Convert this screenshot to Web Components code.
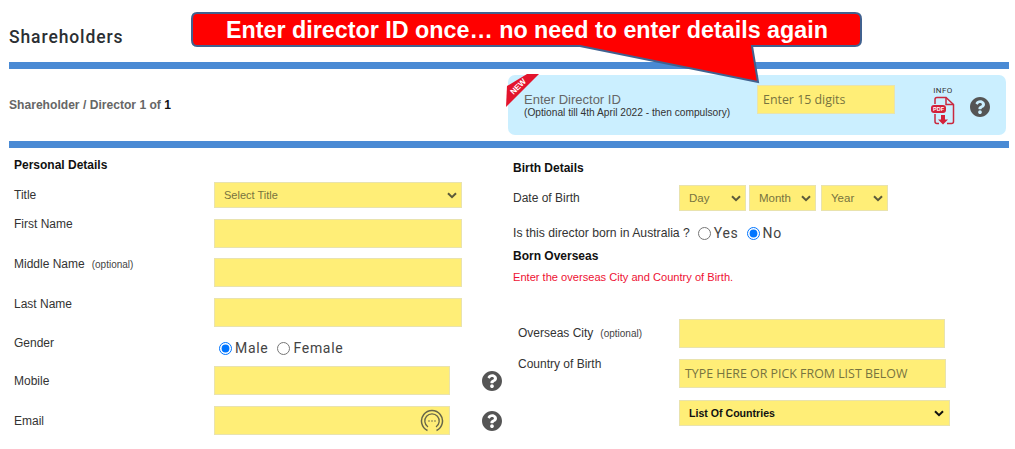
<!DOCTYPE html>
<html>
<head>
<meta charset="utf-8">
<title>Shareholders</title>
<style>
  html, body { margin: 0; padding: 0; background: #fff; }
</style>
</head>
<body>
<sh-page></sh-page>
<script>
const SANS = '"Liberation Sans", Arial, sans-serif';
const QUESTION = "M504 256c0 136.997-111.043 248-248 248S8 392.997 8 256C8 119.083 119.043 8 256 8s248 111.083 248 248zM262.655 90c-54.497 0-89.255 22.957-116.549 63.758-3.536 5.286-2.353 12.415 2.715 16.258l34.699 26.31c5.205 3.947 12.621 3.008 16.665-2.122 17.864-22.658 30.113-35.797 57.303-35.797 20.429 0 45.698 13.148 45.698 32.958 0 14.976-12.363 22.667-32.534 33.976C247.128 238.528 216 254.941 216 296v4c0 6.627 5.373 12 12 12h56c6.627 0 12-5.373 12-12v-1.333c0-28.462 83.186-29.647 83.186-106.667 0-58.002-60.165-102-116.531-102zM256 338c-25.365 0-46 20.635-46 46 0 25.364 20.635 46 46 46s46-20.636 46-46c0-25.365-20.635-46-46-46z";

customElements.define('help-icon', class extends HTMLElement {
   constructor(){ super(); this.attachShadow({mode:'open'}); }
   connectedCallback(){
      this.shadowRoot.innerHTML = `
      <style>
      :host{ display:block; width:20px; height:20px; }
      svg{ display:block; width:20px; height:20px; }
      </style>
      <svg viewBox="8 8 496 496"><path fill="#555" d="${QUESTION}"/></svg>`;
   }
});

customElements.define('pdf-icon', class extends HTMLElement {
   constructor(){ super(); this.attachShadow({mode:'open'}); }
   connectedCallback(){
      this.shadowRoot.innerHTML = `
      <style>
      :host{ display:flex; flex-direction:column; align-items:center; width:26px; }
      span{ font:8px/9px Roboto, ${SANS}; letter-spacing:.4px; color:#333; }
      svg{ display:block; margin-top:1px; }
      </style>
      <span>INFO</span>
      <svg width="26" height="29" viewBox="0 0 26 29">
        <path d="M5 8V3.5Q5 1.5 7 1.5H16L23.5 8.5V25.5Q23.5 27.5 21.5 27.5H17M9 27.5H7Q5 27.5 5 25.5V18" fill="none" stroke="#c9283e" stroke-width="1.5"/>
        <path d="M16 1.5V8.5H23.5" fill="none" stroke="#c9283e" stroke-width="1.5"/>
        <rect x="1" y="9" width="15" height="8" rx="3" fill="#d3203a"/>
        <path d="M11 19H15V23.5H18L13 28.5L8 23.5H11Z" fill="#d3203a"/>
        <text x="8.5" y="15" text-anchor="middle" font-size="5.5" font-weight="700" font-family="Liberation Sans" fill="#fff">PDF</text>
      </svg>`;
   }
});

// yellow text box, the text inside it is the placeholder
customElements.define('yellow-box', class extends HTMLElement {
   constructor(){ super(); this.attachShadow({mode:'open'}); }
   connectedCallback(){
      let w = this.getAttribute("w") || 248;
      let h = this.getAttribute("h") || 29;
      this.shadowRoot.innerHTML = `
      <style>
      :host{ display:flex; align-items:center; box-sizing:border-box; width:${w}px; height:${h}px;
        background:#ffee77; border:1px solid #e9e3ae; padding:0 5px;
        font:12.4px "Open Sans", sans-serif; color:#77733f; white-space:nowrap; }
      .end{ margin-left:auto; display:flex; }
      </style>
      <slot></slot><span class="end"><slot name="end"></slot></span>`;
   }
});

customElements.define('yellow-select', class extends HTMLElement {
   constructor(){ super(); this.attachShadow({mode:'open'}); }
   connectedCallback(){
      let w = this.getAttribute("w") || 248;
      let strong = this.hasAttribute("strong");
      let size = this.getAttribute("size") || 11;
      this.shadowRoot.innerHTML = `
      <style>
      :host{ display:flex; align-items:center; justify-content:space-between; box-sizing:border-box;
        width:${w}px; height:26px; background:#ffee77; border:1px solid #e9e3ae;
        padding:0 ${strong ? 5 : 4}px 0 9px; font:${strong ? "bold " : ""}${size}px ${SANS};
        color:${strong ? "#111" : "#77733f"}; white-space:nowrap; }
      svg{ display:block; flex:none; }
      </style>
      <slot></slot>
      <svg width="10" height="7" viewBox="0 0 10 7"><path d="M1 1.2L5 5.2L9 1.2" fill="none" stroke="${strong ? "#111" : "#5c5a3a"}" stroke-width="2"/></svg>`;
   }
});

customElements.define('radio-opt', class extends HTMLElement {
   constructor(){ super(); this.attachShadow({mode:'open'}); }
   connectedCallback(){
      this.shadowRoot.innerHTML = `
      <style>
      :host{ display:inline-flex; align-items:center; font:14px Roboto, sans-serif; letter-spacing:.7px; color:#444; }
      input{ margin:0 3px 0 0; width:13px; height:13px; }
      </style>
      <input type="radio" name="${this.getAttribute("group")}" ${this.hasAttribute("checked") ? "checked" : ""}><slot></slot>`;
   }
});

// label on the left, control(s) on the right
customElements.define('form-field', class extends HTMLElement {
   constructor(){ super(); this.attachShadow({mode:'open'}); }
   connectedCallback(){
      let note = this.getAttribute("note");
      this.shadowRoot.innerHTML = `
      <style>
      :host{ display:flex; align-items:flex-start; font:12px ${SANS}; color:#333; }
      .label{ flex:none; width:var(--label-w,200px); line-height:10px; padding-top:${this.getAttribute("lt") || 0}px; white-space:nowrap; }
      small{ font-size:10px; margin-left:7px; color:#444; }
      .ctl{ display:flex; align-items:center; }
      </style>
      <div class="label">${this.getAttribute("label")}${note ? `<small>${note}</small>` : ""}</div>
      <div class="ctl"><slot></slot></div>`;
   }
});

customElements.define('id-panel', class extends HTMLElement {
   constructor(){ super(); this.attachShadow({mode:'open'}); }
   connectedCallback(){
      this.shadowRoot.innerHTML = `
      <style>
      :host{ display:block; position:relative; box-sizing:border-box; width:498px; height:60px; background:#cbefff; border-radius:7px; font-family:${SANS}; }
      .row{ display:flex; align-items:flex-start; height:100%; }
      .txt{ flex:none; width:233px; padding:17px 0 0 16px; box-sizing:content-box; }
      .t1{ font-size:13px; line-height:15px; color:#666; }
      .t2{ font-size:10.2px; line-height:12px; color:#333; white-space:nowrap; }
      yellow-box{ margin-top:10px; }
      pdf-icon{ margin:11px 0 0 35px; }
      help-icon{ margin:22px 0 0 14px; }
      .ribbon{ position:absolute; left:-2px; top:-2px; }
      .ribbon text{ font:bold 8px ${SANS}; fill:#fff; }
      </style>
      <div class="row">
        <div class="txt">
          <div class="t1">Enter Director ID</div>
          <div class="t2">(Optional till 4th April 2022 - then compulsory)</div>
        </div>
        <yellow-box w="138"><slot></slot></yellow-box>
        <pdf-icon></pdf-icon>
        <help-icon></help-icon>
      </div>
      <svg class="ribbon" width="36" height="36" viewBox="0 0 36 36">
        <path d="M1 13L21 1H33L0 34Z" fill="#e3142c"/>
        <text transform="translate(7.5 22) rotate(-45)">NEW</text>
      </svg>`;
   }
});

customElements.define('call-out', class extends HTMLElement {
   constructor(){ super(); this.attachShadow({mode:'open'}); }
   connectedCallback(){
      this.shadowRoot.innerHTML = `
      <style>
      :host{ display:block; position:absolute; left:190px; top:11px; width:674px; height:73px; }
      svg{ position:absolute; left:0; top:0; }
      div{ position:absolute; left:36px; top:6px; height:26px; font:bold 23.3px/26px ${SANS}; color:#fff; white-space:nowrap; }
      </style>
      <svg width="674" height="73" viewBox="0 0 674 73">
        <path d="M7 2H665Q671 2 671 8V29Q671 35 665 35H562L568 71L390 35H7Q2 35 2 29V8Q2 2 7 2Z" fill="#f00" stroke="#41618f" stroke-width="2"/>
      </svg>
      <div><slot></slot></div>`;
   }
});

customElements.define('sh-page', class extends HTMLElement {
   constructor(){ super(); this.attachShadow({mode:'open'}); }
   connectedCallback(){
      this.shadowRoot.innerHTML = `
      <style>
      :host{ display:block; position:relative; width:1015px; height:449px; overflow:hidden; box-sizing:border-box; padding:0 6px 0 9px; font:12px ${SANS}; color:#222; }
      h1{ margin:0; height:62px; box-sizing:border-box; padding-top:26px; font:500 17.5px/22px Roboto, sans-serif; letter-spacing:.9px; color:#2b2f33; }
      .band{ border:solid #4a8ad4; border-width:7px 0; height:72px; display:flex; align-items:center; justify-content:space-between; padding-right:3px; }
      .crumb{ font-weight:bold; font-size:12.1px; color:#666; }
      .crumb b{ color:#111; }
      .cols{ display:flex; }
      .left{ flex:none; width:504px; padding-left:5px; box-sizing:border-box; }
      .right{ flex:none; width:495px; --label-w:166px; }
      h2{ margin:0; font:bold 12px/14px ${SANS}; color:#111; }
      .left h2{ margin-top:10px; }
      .right h2.birth{ margin-top:13px; }
      form-field.t11{ margin-top:11px; }
      form-field.t10{ margin-top:10px; }
      .gap{ display:flex; gap:32px; align-items:center; }
      .radios{ display:flex; gap:9px; height:26px; align-items:center; margin-left:5px; }
      .dob{ display:flex; }
      .q{ margin-top:11px; height:22px; display:flex; align-items:center; color:#333; font-size:12.2px; }
      .q radio-opt{ margin-left:8px; }
      .q radio-opt + radio-opt{ margin-left:8px; }
      .red{ margin-top:7px; font-size:11.1px; line-height:14px; color:#ee1133; }
      .over{ margin-left:5px; --label-w:161px; }
      </style>
      <h1>Shareholders</h1>
      <div class="band">
        <div class="crumb">Shareholder / Director 1 of <b>1</b></div>
        <id-panel>Enter 15 digits</id-panel>
      </div>
      <div class="cols">
        <div class="left">
          <h2>Personal Details</h2>
          <form-field label="Title" lt="8" style="margin-top:10px"><yellow-select>Select Title</yellow-select></form-field>
          <form-field label="First Name" class="t11"><yellow-box></yellow-box></form-field>
          <form-field label="Middle Name" note="(optional)" lt="1" class="t10"><yellow-box></yellow-box></form-field>
          <form-field label="Last Name" lt="1" class="t11"><yellow-box></yellow-box></form-field>
          <form-field label="Gender" lt="3" style="margin-top:8px">
            <div class="radios"><radio-opt group="g" checked>Male</radio-opt><radio-opt group="g">Female</radio-opt></div>
          </form-field>
          <form-field label="Mobile" lt="10" style="margin-top:5px">
            <div class="gap"><yellow-box w="236"></yellow-box><help-icon></help-icon></div>
          </form-field>
          <form-field label="Email" lt="10" class="t11">
            <div class="gap">
              <yellow-box w="236">
                <svg slot="end" width="24" height="24" viewBox="0 0 24 24" fill="none" stroke="#66664a">
                  <path d="M7.5 21.5A10.5 10.5 0 1 1 16.5 21.5" stroke-width="1.5"/>
                  <path d="M8 18A7.2 7.2 0 1 1 16 18" stroke-width="1.3"/>
                  <path d="M9 12h.01M12 12h.01M15 12h.01" stroke-width="1.6" stroke-linecap="round"/>
                </svg>
              </yellow-box>
              <help-icon></help-icon>
            </div>
          </form-field>
        </div>
        <div class="right">
          <h2 class="birth">Birth Details</h2>
          <form-field label="Date of Birth" lt="8" style="margin-top:10px">
            <div class="dob">
              <yellow-select w="67" size="11.5">Day</yellow-select>
              <yellow-select w="67" size="11.5" style="margin-left:3px">Month</yellow-select>
              <yellow-select w="67" size="11.5" style="margin-left:5px">Year</yellow-select>
            </div>
          </form-field>
          <div class="q">Is this director born in Australia ?
            <radio-opt group="b">Yes</radio-opt><radio-opt group="b" checked>No</radio-opt></div>
          <h2 style="margin-top:5px">Born Overseas</h2>
          <div class="red">Enter the overseas City and Country of Birth.</div>
          <form-field class="over" label="Overseas City" note="(optional)" lt="9" style="margin-top:35px"><yellow-box w="266"></yellow-box></form-field>
          <form-field class="over t11" label="Country of Birth"><yellow-box w="267">TYPE HERE OR PICK FROM LIST BELOW</yellow-box></form-field>
          <form-field style="--label-w:166px;margin-top:12px" label=""><yellow-select w="271" size="10.6" strong>List Of Countries</yellow-select></form-field>
        </div>
      </div>
      <call-out>Enter director ID once… no need to enter details again</call-out>`;
   }
});
</script>
</body>
</html>
